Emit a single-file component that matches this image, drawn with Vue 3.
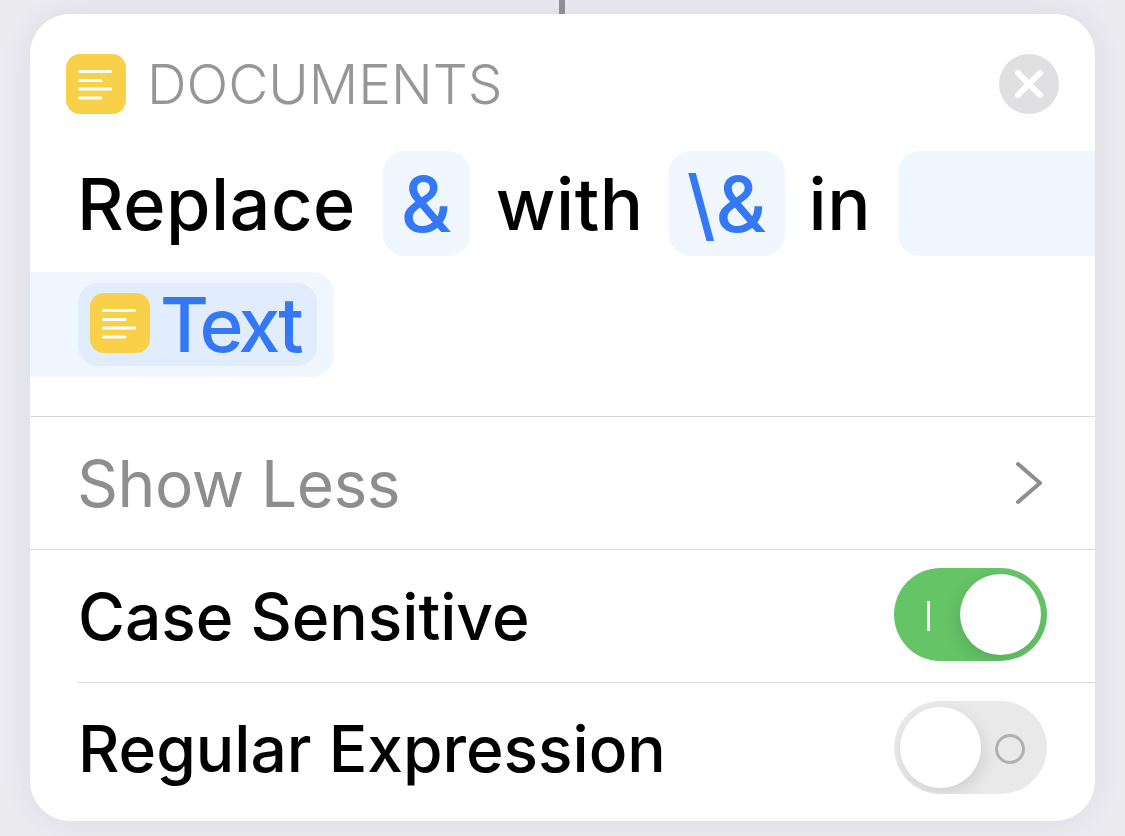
<template>
  <div class="page">
    <div class="connector"></div>
    <div class="card">
      <div class="header">
        <svg class="doc-icon" viewBox="0 0 60 60">
          <rect width="60" height="60" rx="14" fill="#f9d148" />
          <g stroke="#fff" stroke-width="3" stroke-linecap="round">
            <line x1="13.5" y1="17.5" x2="44.5" y2="17.5" />
            <line x1="13.5" y1="26.5" x2="35" y2="26.5" />
            <line x1="13.5" y1="35" x2="44.5" y2="35" />
            <line x1="13.5" y1="44" x2="35" y2="44" />
          </g>
        </svg>
        <span class="app-name">DOCUMENTS</span>
        <svg class="close" viewBox="0 0 60 60">
          <circle cx="30" cy="30" r="30" fill="#e0e0e2" />
          <g stroke="#fff" stroke-width="6" stroke-linecap="round">
            <line x1="19" y1="19" x2="41" y2="41" />
            <line x1="41" y1="19" x2="19" y2="41" />
          </g>
        </svg>
      </div>

      <div class="sentence">
        <span class="word first">Replace</span>
        <span class="token amp">&amp;</span>
        <span class="word">with</span>
        <span class="token amp2">\&amp;</span>
        <span class="word">in</span>
        <span class="token open"></span>
      </div>
      <div class="variable-line">
        <div class="variable">
          <svg class="doc-icon" viewBox="0 0 60 60">
            <rect width="60" height="60" rx="14" fill="#f9d148" />
            <g stroke="#fff" stroke-width="3" stroke-linecap="round">
              <line x1="13.5" y1="17.5" x2="44.5" y2="17.5" />
              <line x1="13.5" y1="26.5" x2="35" y2="26.5" />
              <line x1="13.5" y1="35" x2="44.5" y2="35" />
              <line x1="13.5" y1="44" x2="35" y2="44" />
            </g>
          </svg>
          <span>Text</span>
        </div>
      </div>

      <div class="row less">
        <span class="less-label">Show Less</span>
        <svg class="chevron" viewBox="0 0 28 44">
          <path d="M3 3 L25 22 L3 41" fill="none" stroke="#8e8e90" stroke-width="4" stroke-linecap="round" stroke-linejoin="round" />
        </svg>
      </div>
      <div class="row option">
        <span>Case Sensitive</span>
        <div class="switch on">
          <i class="mark-on"></i>
          <i class="knob"></i>
        </div>
      </div>
      <div class="row option last">
        <span>Regular Expression</span>
        <div class="switch off">
          <i class="knob"></i>
          <i class="mark-off"></i>
        </div>
      </div>
    </div>
  </div>
</template>

<script setup>
</script>

<style>
html, body {
  margin: 0;
  background: #eaeaef;
}
</style>

<style scoped>
.page {
  position: relative;
  width: 1125px;
  height: 836px;
  padding: 14px 30px 15px;
  box-sizing: border-box;
  overflow: hidden;
  background: #ebebf0;
  font-family: Inter, "Liberation Sans", sans-serif;
}

.connector {
  position: absolute;
  top: 0;
  left: 559px;
  width: 6px;
  height: 14px;
  background: #8e8e93;
}

.card {
  height: 807px;
  background: #fff;
  border-radius: 40px;
  box-shadow: 0 0 36px rgba(60, 60, 90, 0.09);
  overflow: hidden;
  display: flex;
  flex-direction: column;
}

.header {
  display: flex;
  align-items: center;
  padding: 40px 36px 0;
  height: 60px;
}

.doc-icon {
  width: 60px;
  height: 60px;
  flex-shrink: 0;
}

.app-name {
  margin-left: 21px;
  font-size: 55px;
  font-weight: 300;
  color: #969696;
}

.close {
  width: 60px;
  height: 60px;
  margin-left: auto;
}

.sentence {
  display: flex;
  align-items: center;
  margin-top: 37px;
  height: 105px;
  font-size: 72px;
  font-weight: 500;
  letter-spacing: 0.5px;
  color: #000;
  white-space: nowrap;
}

.word.first {
  margin-left: 47px;
}

.token {
  height: 105px;
  box-sizing: border-box;
  display: flex;
  align-items: center;
  justify-content: center;
  background: #eff6fe;
  border-radius: 22px;
  color: #3478f6;
  font-size: 78px;
  letter-spacing: 0;
}

.amp {
  width: 87px;
  margin: 0 26px 0 27px;
}

.amp2 {
  width: 116px;
  margin: 0 24px 0 25px;
}

.open {
  flex: 1;
  margin-left: 27px;
  border-radius: 22px 0 0 22px;
}

.variable-line {
  align-self: flex-start;
  margin-top: 16px;
  height: 105px;
  width: 304px;
  box-sizing: border-box;
  padding-left: 48px;
  display: flex;
  align-items: center;
  background: #eff6fe;
  border-radius: 0 22px 22px 0;
}

.variable {
  height: 83px;
  width: 239px;
  box-sizing: border-box;
  padding-left: 12px;
  display: flex;
  align-items: center;
  gap: 10px;
  background: #e1edfc;
  border-radius: 20px;
  color: #3478f6;
  font-size: 75px;
  font-weight: 500;
  letter-spacing: -3.5px;
  white-space: nowrap;
}

.variable .doc-icon {
  margin-bottom: 3px;
}

.row {
  display: flex;
  align-items: center;
  justify-content: space-between;
  padding: 0 48px;
  font-size: 64px;
  white-space: nowrap;
}

.less {
  height: 132px;
  margin-top: 39px;
  border-top: 1px solid #d8d8da;
  border-bottom: 1px solid #d8d8da;
  color: #8e8e90;
  letter-spacing: -0.5px;
}

.less-label {
  margin-left: -1px;
}

.chevron {
  width: 28px;
  height: 44px;
  margin-right: 4px;
}

.option {
  height: 132px;
  color: #000;
  font-weight: 500;
}

.option.last {
  position: relative;
  height: 133px;
}

.option.last::before {
  content: "";
  position: absolute;
  top: 0;
  left: 48px;
  right: 0;
  height: 1px;
  background: #d8d8da;
}

.switch {
  position: relative;
  width: 153px;
  height: 93px;
  border-radius: 47px;
  flex-shrink: 0;
  margin-bottom: 3px;
  overflow: hidden;
}

.knob {
  position: absolute;
  top: 6px;
  width: 81px;
  height: 81px;
  background: #fff;
  border-radius: 50%;
}

.on {
  background: #64c466;
}

.on .knob {
  right: 6px;
  box-shadow: -3px 6px 16px rgba(0, 0, 0, 0.1);
}

.off {
  background: #e9e9ea;
}

.off .knob {
  left: 6px;
  box-shadow: 3px 6px 16px rgba(0, 0, 0, 0.1);
}

.mark-on {
  position: absolute;
  left: 33px;
  top: 33px;
  width: 3px;
  height: 30px;
  background: #fff;
}

.mark-off {
  position: absolute;
  left: 101px;
  top: 33px;
  width: 30px;
  height: 30px;
  box-sizing: border-box;
  border: 3px solid #b0b0b2;
  border-radius: 50%;
}
</style>
